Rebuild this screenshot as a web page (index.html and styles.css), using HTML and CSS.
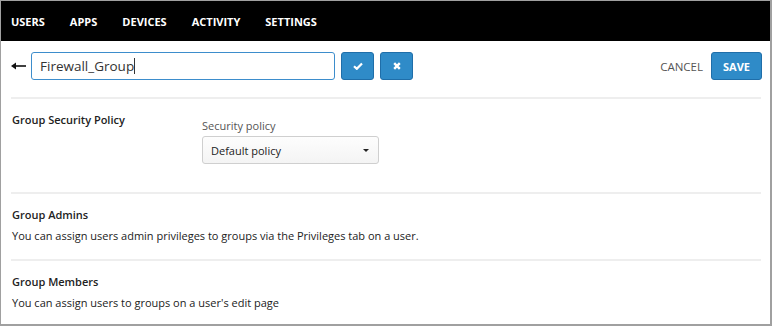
FILE: index.html
```html
<!DOCTYPE html>
<html lang="en">
<head>
    <meta charset="UTF-8">
    <meta name="viewport" content="width=device-width, initial-scale=1.0">
    <title>Edit Group</title>
    <link rel="stylesheet" href="styles.css">
</head>
<body>
    <div class="frame">
        <nav class="topnav">
            <a class="nav-item">Users</a>
            <a class="nav-item">Apps</a>
            <a class="nav-item">Devices</a>
            <a class="nav-item">Activity</a>
            <a class="nav-item">Settings</a>
        </nav>

        <div class="toolbar">
            <span class="back">
                <svg width="15" height="8" viewBox="0 0 15 8"><path d="M0 4 L5 0.5 L5 7.5 Z" fill="#111"/><path d="M4 4 H15" stroke="#111" stroke-width="1.6"/></svg>
            </span>
            <div class="name-field">Firewall_Group<span class="caret-line"></span></div>
            <button class="icon-btn" title="Confirm">
                <svg width="10" height="8" viewBox="0 0 10 8"><path d="M1 4.2 L3.8 6.8 L9 1.4" fill="none" stroke="#fff" stroke-width="2.2"/></svg>
            </button>
            <button class="icon-btn" title="Discard">
                <svg width="8" height="8" viewBox="0 0 8 8"><path d="M1.2 1.2 L6.8 6.8 M6.8 1.2 L1.2 6.8" fill="none" stroke="#fff" stroke-width="2.4"/></svg>
            </button>
            <div class="spacer"></div>
            <button class="cancel">Cancel</button>
            <button class="save">Save</button>
        </div>

        <section class="section policy">
            <h3>Group Security Policy</h3>
            <div class="field">
                <label>Security policy</label>
                <div class="select">
                    <span>Default policy</span>
                    <span class="arrow"></span>
                </div>
            </div>
        </section>

        <section class="section">
            <h3>Group Admins</h3>
            <p>You can assign users admin privileges to groups via the Privileges tab on a user.</p>
        </section>

        <section class="section last">
            <h3>Group Members</h3>
            <p>You can assign users to groups on a user's edit page</p>
        </section>
    </div>
</body>
</html>
```

FILE: styles.css
```css
body {
    margin: 0;
    padding: 0;
    font-family: "Open Sans", Arial, sans-serif;
    color: #222;
}

.frame {
    box-sizing: border-box;
    width: 772px;
    height: 326px;
    border: 1px solid #a0a0a0;
    border-right-width: 2px;
    border-bottom-width: 2px;
    background: #fff;
}

.topnav {
    display: flex;
    align-items: center;
    gap: 25px;
    height: 40px;
    padding-left: 10px;
    background: #000;
}

.nav-item {
    color: #fff;
    font-size: 11px;
    font-weight: 700;
    text-transform: uppercase;
}

.toolbar {
    display: flex;
    align-items: center;
    padding: 11px 8px 0 10px;
    height: 28px;
}

.back {
    width: 20px;
    display: flex;
    align-items: center;
}

.name-field {
    box-sizing: border-box;
    width: 304px;
    height: 28px;
    border: 1px solid #3d8dcc;
    border-radius: 3px;
    padding-left: 8px;
    font-size: 13.5px;
    line-height: 26px;
    color: #333;
    display: flex;
    align-items: center;
}

.caret-line {
    display: inline-block;
    width: 1px;
    height: 16px;
    background: #333;
}

.icon-btn {
    box-sizing: border-box;
    width: 33px;
    height: 28px;
    margin-left: 6px;
    border: 1px solid #1f6ea9;
    border-radius: 3px;
    background: #2f8bc8;
    display: flex;
    align-items: center;
    justify-content: center;
    padding: 0;
}

.spacer {
    flex: 1;
}

.cancel {
    border: none;
    background: none;
    font-family: inherit;
    font-size: 11.5px;
    color: #555;
    text-transform: uppercase;
    padding: 0;
    margin-right: 8px;
}

.save {
    box-sizing: border-box;
    width: 51px;
    height: 28px;
    border: 1px solid #1f6ea9;
    border-radius: 3px;
    background: #2f8bc8;
    color: #fff;
    font-family: inherit;
    font-size: 11px;
    font-weight: 700;
    text-transform: uppercase;
    padding: 0;
}

.section {
    margin: 0 9px 0 10px;
    border-top: 2px solid #eeeeee;
    padding: 13px 0 15px 1px;
}

.section.policy {
    margin-top: 17px;
    display: flex;
    padding-bottom: 28px;
}

.section.last {
    padding-bottom: 0;
}

.section h3 {
    margin: 0;
    font-size: 11px;
    font-weight: 600;
    line-height: 16px;
}

.section p {
    margin: 5px 0 0;
    font-size: 11px;
    line-height: 16px;
    color: #222;
}

.policy h3 {
    width: 190px;
}

.field {
    padding-top: 7px;
}

.field label {
    display: block;
    font-size: 11px;
    color: #555;
    line-height: 14px;
    margin-bottom: 3px;
}

.select {
    box-sizing: border-box;
    width: 177px;
    height: 28px;
    border: 1px solid #cfcfcf;
    border-radius: 3px;
    background: linear-gradient(#fdfdfd, #f4f4f4);
    display: flex;
    align-items: center;
    justify-content: space-between;
    padding: 0 9px 0 8px;
    font-size: 11px;
    color: #222;
}

.arrow {
    width: 0;
    height: 0;
    border-left: 3px solid transparent;
    border-right: 3px solid transparent;
    border-top: 3px solid #222;
}
```
